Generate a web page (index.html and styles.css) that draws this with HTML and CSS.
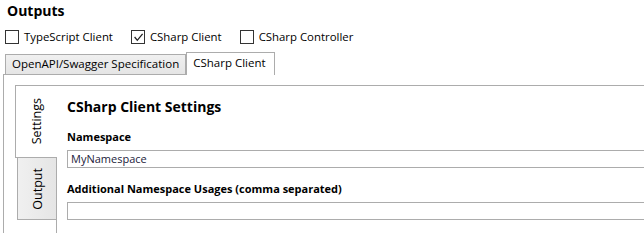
FILE: index.html
```html
<!DOCTYPE html>
<html lang="en">
<head>
  <meta charset="UTF-8">
  <title>Outputs</title>
  <link rel="stylesheet" href="styles.css">
</head>
<body>
  <div class="page">
    <h1 class="title">Outputs</h1>

    <div class="outputs">
      <label class="check">
        <span class="box"></span>
        <span>TypeScript Client</span>
      </label>
      <label class="check">
        <span class="box">
          <svg viewBox="0 0 13 13" width="13" height="13">
            <path d="M2.6 6 L5.3 9.3 L10.6 2.8" stroke="#212121" stroke-width="1.3" fill="none" />
          </svg>
        </span>
        <span>CSharp Client</span>
      </label>
      <label class="check">
        <span class="box"></span>
        <span>CSharp Controller</span>
      </label>
    </div>

    <div class="tabs">
      <div class="tab-strip">
        <div class="tab">OpenAPI/Swagger Specification</div>
        <div class="tab active">CSharp Client</div>
      </div>
      <div class="tab-panel">
        <div class="inner">
          <div class="side-tabs">
            <div class="side-tab active"><span>Settings</span></div>
            <div class="side-tab"><span>Output</span></div>
          </div>
          <div class="content">
            <h2>CSharp Client Settings</h2>
            <div class="field">
              <div class="label">Namespace</div>
              <div class="input">MyNamespace</div>
            </div>
            <div class="field">
              <div class="label">Additional Namespace Usages (comma separated)</div>
              <div class="input"></div>
            </div>
          </div>
        </div>
      </div>
    </div>
  </div>
</body>
</html>
```

FILE: styles.css
```css
html, body {
  margin: 0;
  padding: 0;
  background-color: white;
  overflow: hidden;
}
body {
  font-family: 'Open Sans', 'Noto Sans', sans-serif;
  font-size: 11px;
  color: #000;
}
.page {
  width: 644px;
  height: 233px;
  overflow: hidden;
}
.title {
  margin: 0;
  padding: 1px 0 0 7px;
  font-size: 14px;
  font-weight: bold;
  line-height: 20px;
}
.outputs {
  display: flex;
  margin-top: 9px;
  padding-left: 5px;
  font-size: 11.4px;
}
.check {
  display: flex;
  align-items: center;
  gap: 5px;
  margin-right: 18px;
  line-height: 14px;
}
.box {
  width: 12px;
  height: 12px;
  border: 1px solid #333;
  background-color: white;
}
.box svg {
  display: block;
}
.tabs {
  margin-top: 8px;
  margin-left: 3px;
  width: 700px;
}
.tab-strip {
  display: flex;
  align-items: flex-end;
  height: 23px;
  font-size: 11.5px;
}
.tab-strip::before {
  content: '';
  width: 2px;
  border-bottom: 1px solid #acacac;
}
.tab {
  box-sizing: border-box;
  height: 21px;
  line-height: 18px;
  padding: 0 6px;
  border: 1px solid #acacac;
  background: linear-gradient(#f0f0f0, #e5e5e5);
}
.tab.active {
  height: 23px;
  line-height: 20px;
  padding: 0 8px 0 6px;
  border-bottom: none;
  background: white;
}
.tab-panel {
  border-left: 1px solid #acacac;
  padding: 10px 0 0 11px;
  height: 170px;
}
.inner {
  display: flex;
  height: 100%;
}
.side-tabs {
  display: flex;
  flex-direction: column;
  width: 41px;
}
.side-tab {
  display: flex;
  align-items: center;
  justify-content: center;
  box-sizing: border-box;
  margin-left: 2px;
  width: 39px;
  height: 62px;
  border-left: 1px solid #acacac;
  border-bottom: 1px solid #acacac;
  background: linear-gradient(to right, #f0f0f0, #e5e5e5);
}
.side-tab span {
  writing-mode: vertical-rl;
  transform: rotate(180deg);
  font-size: 12.5px;
}
.side-tab.active {
  margin-left: 0;
  margin-right: -1px;
  width: 42px;
  height: 73px;
  border-top: 1px solid #acacac;
  background: white;
  position: relative;
  z-index: 1;
}
.content {
  flex: 1;
  border-top: 1px solid #acacac;
  border-left: 1px solid #acacac;
  padding: 11px 0 0 10px;
}
h2 {
  margin: 0 0 12px 0;
  font-size: 14px;
  font-weight: bold;
  line-height: 20px;
}
.field {
  margin-bottom: 13px;
}
.label {
  font-weight: bold;
  line-height: 16px;
  margin-bottom: 5px;
}
.input {
  height: 16px;
  line-height: 16px;
  border: 1px solid #acacac;
  padding-left: 3px;
  color: #1b1b3a;
}
```
